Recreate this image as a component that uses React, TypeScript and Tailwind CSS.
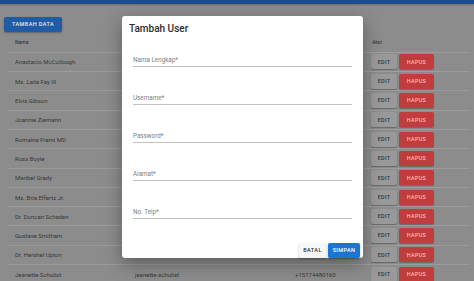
import React from "react";

const rows: [string, string, string][] = [
  ["Anastacio McCullough", "", ""],
  ["Ms. Laila Fay III", "", ""],
  ["Elvis Gibson", "", ""],
  ["Joannie Ziemann", "", ""],
  ["Romaine Frami MD", "", ""],
  ["Ross Boyle", "", ""],
  ["Maribel Grady", "", ""],
  ["Ms. Bria Effertz Jr.", "", ""],
  ["Dr. Duncan Schaden", "", ""],
  ["Gustave Smitham", "", ""],
  ["Dr. Hershel Upton", "", ""],
  ["Jeanette Schulist", "jeanette-schulist", "+15174480160"],
];

const fields = ["Nama Lengkap*", "Username*", "Password*", "Alamat*", "No. Telp*"];

export default function App() {
  return (
    <div className="relative w-[474px] h-[281px] overflow-hidden bg-[#8c8c8c] font-['Roboto',sans-serif]">
      <div className="h-[4px] bg-[#1c4d88] shadow-[0_1px_2px_rgba(0,0,0,0.25)]" />
      <div className="pl-[4px] pt-[13px]">
        <div className="w-[58px] h-[15px] rounded-[2px] bg-[#1f5ca3] shadow-[0_1px_2px_rgba(0,0,0,0.3)] flex items-center justify-center text-[5.5px] font-medium tracking-[0.4px] text-[#e3eaf4] leading-none">
          TAMBAH DATA
        </div>
      </div>
      <div className="ml-[8px] mr-[5px] mt-[1.5px] text-[#383838]">
        <div className="grid grid-cols-[120px_160px_77px_1fr] h-[19.3px] items-center border-b border-[#9c9c9c] text-[5px] text-[#2a2a2a]">
          <div className="pl-[7px]">Nama</div>
          <div className="pl-[7px]"></div>
          <div className="pl-[7px]"></div>
          <div className="pl-[7px]">Aksi</div>
        </div>
        {rows.map((r, i) => (
          <div
            key={i}
            className="grid grid-cols-[120px_160px_77px_1fr] h-[19.3px] items-center border-b border-[#9c9c9c] text-[6px]"
          >
            <div className="pl-[7px] whitespace-nowrap">{r[0]}</div>
            <div className="pl-[7px] whitespace-nowrap">{r[1]}</div>
            <div className="pl-[7px] whitespace-nowrap">{r[2]}</div>
            <div className="pl-[6px] flex gap-[2px]">
              <div className="w-[26px] h-[15px] rounded-[2px] bg-[#999999] shadow-[0_1px_1px_rgba(0,0,0,0.25)] flex items-center justify-center text-[5.5px] font-medium tracking-[0.3px] text-[#3a3a3a]">
                EDIT
              </div>
              <div className="w-[35px] h-[15px] rounded-[2px] bg-[#c13c3c] shadow-[0_1px_1px_rgba(0,0,0,0.25)] flex items-center justify-center text-[5.5px] font-medium tracking-[0.3px] text-[#efbcbc]">
                HAPUS
              </div>
            </div>
          </div>
        ))}
      </div>

      <div className="absolute left-[122px] top-[16px] w-[241px] h-[242px] bg-white rounded-[3px] shadow-[0_6px_18px_rgba(0,0,0,0.35)] flex flex-col">
        <div className="pl-[7px] pt-[7px] h-[19px] text-[10px] leading-[12px] font-medium text-[#2b2b2b]">
          Tambah User
        </div>
        <div className="mt-[20.5px] px-[11px] flex flex-col gap-[26.5px]">
          {fields.map((f) => (
            <div key={f} className="flex flex-col">
              <span className="text-[6.3px] leading-[8px] text-[#808080]">{f}</span>
              <div className="h-[2.5px]" />
              <div className="h-px bg-[#c2c2c2]" />
            </div>
          ))}
        </div>
        <div className="mt-[23.5px] pr-[3px] flex justify-end gap-[2px]">
          <div className="w-[27px] h-[15px] rounded-[2px] bg-[#f7f7f7] shadow-[0_1px_2px_rgba(0,0,0,0.3)] flex items-center justify-center text-[5.5px] font-medium tracking-[0.4px] text-[#333]">
            BATAL
          </div>
          <div className="w-[32px] h-[15px] rounded-[2px] bg-[#1976d2] shadow-[0_1px_2px_rgba(0,0,0,0.3)] flex items-center justify-center text-[5.5px] font-medium tracking-[0.4px] text-white">
            SIMPAN
          </div>
        </div>
      </div>
    </div>
  );
}
